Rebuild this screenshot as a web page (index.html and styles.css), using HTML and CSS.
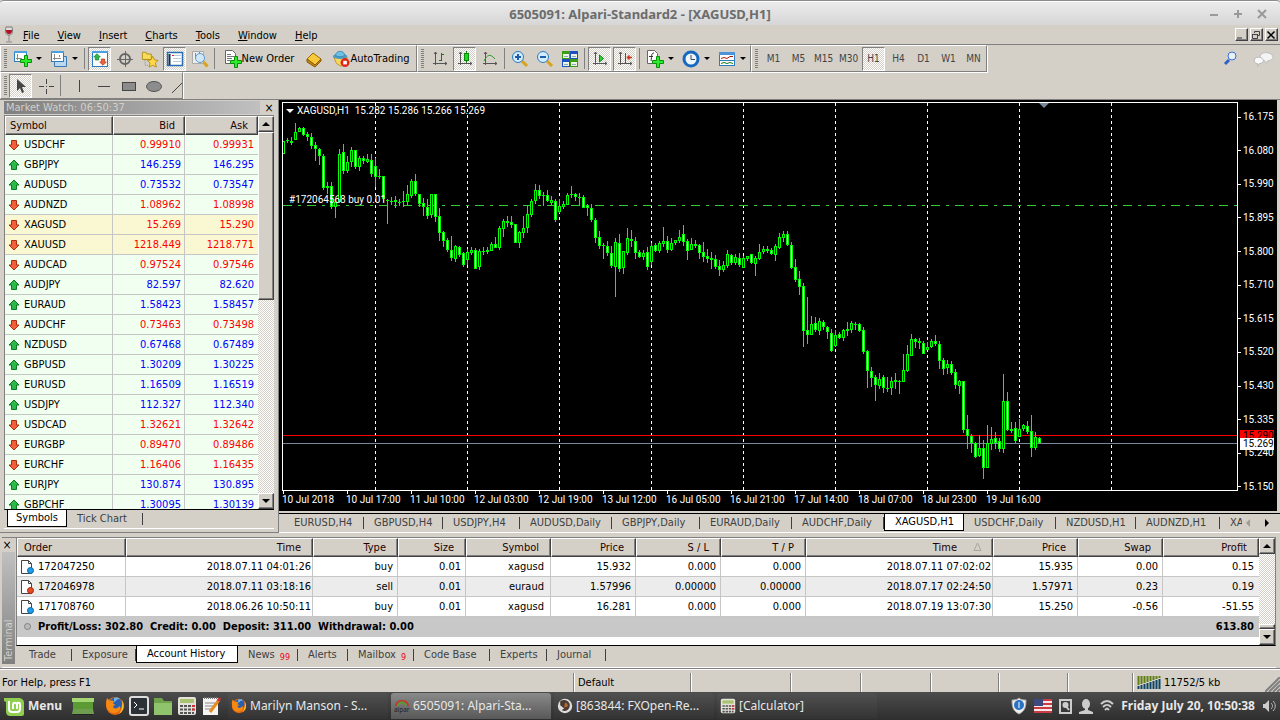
FILE: index.html
```html
<!DOCTYPE html>
<html lang="en">
<head>
    <meta charset="UTF-8">
    <meta name="viewport" content="width=device-width, initial-scale=1.0">
    <title>6505091: Alpari-Standard2 - [XAGUSD,H1]</title>
    <link rel="stylesheet" href="styles.css">
</head>
<body>
    <!-- shared icons -->
    <svg class="sprite" aria-hidden="true">
        <symbol id="up" viewBox="0 0 12 12"><path d="M6 1l5 5H8.500v4.500h-5V6H1z" fill="#2db84a" stroke="#0c7a22"/></symbol>
        <symbol id="down" viewBox="0 0 12 12"><path d="M6 11L1 6h2.500V1.500h5V6H11z" fill="#f0603a" stroke="#a83010"/></symbol>
        <symbol id="plus" viewBox="0 0 12 12"><path d="M4.500 .5h3v4h4v3h-4v4h-3v-4h-4v-3h4z" fill="#2cec2c" stroke="#079007"/></symbol>
        <symbol id="axes" viewBox="0 0 18 18"><path d="M4.500 2v13M2 13.500h14M3 4l1.500-2L6 4M14 12l2 1.500L14 15" fill="none" stroke="#555"/></symbol>
        <symbol id="doc-buy" viewBox="0 0 16 16"><path d="M2.500 1.500h7l3 3v10h-10z" fill="#fff" stroke="#444"/><path d="M9.500 1.500v3h3" fill="none" stroke="#444"/><circle cx="11.500" cy="11.500" r="3" fill="#1e9be8" stroke="#0b68a8"/></symbol>
        <symbol id="doc-sell" viewBox="0 0 16 16"><path d="M2.500 1.500h7l3 3v10h-10z" fill="#fff" stroke="#444"/><path d="M9.500 1.500v3h3" fill="none" stroke="#444"/><circle cx="11.500" cy="11.500" r="3" fill="#e84a22" stroke="#9e2808"/></symbol>
        <symbol id="firefox" viewBox="0 0 20 20"><circle cx="10" cy="10" r="9" fill="#e8660c"/><circle cx="10.500" cy="8" r="6.500" fill="#2a5fb0"/><path d="M9 2c3-1 5 0 6 1-3 0-4 1-4 2l-2 1z" fill="#6fb4ec"/><path d="M1 6l1-4 3 3c2-1 4 0 4 1L8 8c1 0 2 0 2 1-1 1-2 1-2 2 1 2 4 2 7-1 1 4-2 7-6 7-5 0-8-4-8-11z" fill="#f58a12"/><path d="M17 4c3 5 2 11-3 14 3-4 4-9 3-14z" fill="#fdc32c"/></symbol>
        <symbol id="calc" viewBox="0 0 20 20"><rect x="1" y="1" width="18" height="18" rx="2" fill="#e4e2da"/><rect x="3" y="3" width="14" height="4" fill="#a9c36f"/><path d="M3 10h14M3 13.500h14M3 17h14" stroke="#555" stroke-width="2" stroke-dasharray="3 1"/><path d="M15 10h3M15 13.500h3" stroke="#c33" stroke-width="2"/></symbol>
    </svg>

    <header class="titlebar">
        <h1>6505091: Alpari-Standard2 - [XAGUSD,H1]</h1>
        <div class="wm-buttons">
            <button aria-label="Minimize"><svg width="10" height="10"><path d="M1 6h8" stroke-width="2"/></svg></button>
            <button aria-label="Maximize"><svg width="10" height="10"><path d="M1 5h8M5 1v8" stroke-width="2"/></svg></button>
            <button aria-label="Close"><svg width="10" height="10"><path d="M1 1l8 8M9 1L1 9" stroke-width="2"/></svg></button>
        </div>
    </header>

    <nav class="menubar">
        <svg class="wine" width="10" height="18" viewBox="0 0 10 18"><path d="M2 1h6c1 4 1 8-3 8S1 5 2 1z" fill="#ddd" stroke="#777"/><path d="M2 4h6c0 3-1 4-3 4S2 7 2 4z" fill="#b01020"/><path d="M5 9v6M2 16h6" stroke="#888"/></svg>
        <button><u>F</u>ile</button>
        <button><u>V</u>iew</button>
        <button><u>I</u>nsert</button>
        <button><u>C</u>harts</button>
        <button><u>T</u>ools</button>
        <button><u>W</u>indow</button>
        <button><u>H</u>elp</button>
        <div class="mdi-buttons">
            <button aria-label="Minimize chart"><svg width="10" height="10"><path d="M1 8h5" stroke="#808080" stroke-width="2"/></svg></button>
            <button aria-label="Restore chart"><svg width="10" height="10"><path d="M3.500 3V1.500h5v4H7M1.500 4.500h5v4h-5zM1 4.500h6" fill="none" stroke="#444"/></svg></button>
            <button aria-label="Close chart"><svg width="10" height="10"><path d="M1.500 1.500l7 7M8.500 1.500l-7 7" stroke="#000" stroke-width="1.500"/></svg></button>
        </div>
    </nav>

    <div class="toolbar-row">
        <div class="band">
            <i class="grip"></i>
            <button class="drop" aria-label="New chart">
                <svg viewBox="0 0 18 18"><rect x=".5" y="1.500" width="12" height="10" fill="#fff" stroke="#2b7cc0"/><path d="M0 2h13" stroke="#4aa0e0" stroke-width="2"/><path d="M3.500 4v6M2 8.500h6" stroke="#888"/><use href="#plus" x="6" y="5" width="12" height="12"/></svg><i class="caret"></i>
            </button>
            <button class="drop" aria-label="Profiles">
                <svg viewBox="0 0 18 18"><path d="M4.500 6.500h12v10h-12z" fill="#bcd8ee" stroke="#3a78b0"/><rect x="1.500" y="1.500" width="12" height="10" fill="#fff" stroke="#2b7cc0"/><path d="M1 2h13" stroke="#4aa0e0" stroke-width="2"/><path d="M4.500 4v6M3 8.500h8M9.500 5v2" stroke="#888"/></svg><i class="caret"></i>
            </button>
            <i class="sep"></i>
            <button class="pressed" aria-label="Market Watch"><svg viewBox="0 0 18 18"><rect x="1.500" y="1.500" width="15" height="15" fill="#fff" stroke="#2b7cc0"/><path d="M1 2h16" stroke="#4aa0e0" stroke-width="2"/><use href="#up" x="2" y="3" width="8" height="8"/><use href="#down" x="8" y="8" width="8" height="8"/></svg></button>
            <button aria-label="Data Window"><svg viewBox="0 0 18 18"><circle cx="9" cy="9" r="5" fill="none" stroke="#666" stroke-width="2"/><path d="M9.500 1v16M1 9.500h16" stroke="#666"/></svg></button>
            <button aria-label="Navigator"><svg viewBox="0 0 20 20"><path d="M1.500 2.500h4l1 2h5v6h-10z" fill="#f8dc5a" stroke="#b08a10"/><path d="M4.500 11v6h4" fill="none" stroke="#888" stroke-dasharray="1 1"/><path d="M13 7l2 4 4 .5-3 3 1 4.500-4-2-4 2 1-4.500-3-3 4-.5z" fill="#ffd94a" stroke="#b98a12"/></svg></button>
            <button class="pressed" aria-label="Terminal"><svg viewBox="0 0 18 18"><rect x="1.500" y="2.500" width="15" height="13" fill="#fff" stroke="#2b6cb0" stroke-width="1.500"/><path d="M3.500 4v11" stroke="#14324f" stroke-width="2"/><path d="M7 5.500h8M7 8.500h8M7 11.500h8" stroke="#b9c9e0"/><path d="M6 5.500h2" stroke="#e02020"/></svg></button>
            <button aria-label="Strategy Tester"><svg viewBox="0 0 18 18"><path d="M1.500 1.500h11v12h-11z" fill="#eee" stroke="#aaa"/><path d="M4.500 3v6M8.500 2v4" stroke="#888"/><circle cx="9" cy="8" r="4.500" fill="#cfe8fa" stroke="#5b9bd0"/><path d="M12.500 12l4 4.500" stroke="#d8a21a" stroke-width="3"/></svg></button>
            <i class="sep"></i>
            <button class="wide"><svg viewBox="0 0 18 18"><path d="M1.500 .5h7l3 3v10h-10z" fill="#fff" stroke="#666"/><path d="M3 4.500h4M3 6.500h7M3 8.500h5M3 10.500h3" stroke="#777"/><use href="#plus" x="6" y="6" width="12" height="12"/></svg>New Order</button>
            <button aria-label="MetaEditor"><svg viewBox="0 0 18 18"><path d="M2 9l6-6 8 6-6 6z" fill="#f8ca3a" stroke="#9a6a08"/><path d="M2 9v3l8 5 6-6V9l-6 6z" fill="#c98a12" stroke="#8a5a08"/></svg></button>
            <button class="wide auto"><svg viewBox="0 0 20 20"><path d="M2 8h15l-2 7-5 3-5-3z" fill="#f6d860" stroke="#c09020"/><ellipse cx="9" cy="7" rx="8" ry="3" fill="#4a9cc8"/><path d="M4 6c0-6 10-6 10 0-2 2-8 2-10 0z" fill="#6fc0e4" stroke="#3a88b0"/><circle cx="14.500" cy="14" r="5" fill="#e02818"/><rect x="12.500" y="12" width="4" height="4" fill="#fff"/></svg>AutoTrading</button>
        </div>
        <div class="band">
            <i class="grip"></i>
            <button aria-label="Bar chart"><svg viewBox="0 0 18 18"><use href="#axes" width="18" height="18"/><path d="M10.500 3v8M8 10.500h2M11 4.500h2" stroke="#187818"/></svg></button>
            <button class="pressed" aria-label="Candlesticks"><svg viewBox="0 0 18 18"><use href="#axes" width="18" height="18"/><path d="M10.500 1v12" stroke="#187818"/><rect x="8.500" y="3.500" width="4" height="7" fill="#1fd81f" stroke="#078a07"/></svg></button>
            <button aria-label="Line chart"><svg viewBox="0 0 18 18"><use href="#axes" width="18" height="18"/><path d="M3 11c3-6 6-8 11-2" fill="none" stroke="#2a9a2a"/></svg></button>
            <i class="sep"></i>
            <button aria-label="Zoom in"><svg viewBox="0 0 18 18"><path d="M11 11l5 5" stroke="#d8a21a" stroke-width="3"/><circle cx="7" cy="7" r="5.500" fill="#d4ecfc" stroke="#2b7cc0"/><path d="M4 7h6M7 4v6" stroke="#1a5fa8" stroke-width="2"/></svg></button>
            <button aria-label="Zoom out"><svg viewBox="0 0 18 18"><path d="M11 11l5 5" stroke="#d8a21a" stroke-width="3"/><circle cx="7" cy="7" r="5.500" fill="#d4ecfc" stroke="#2b7cc0"/><path d="M4 7h6" stroke="#1a5fa8" stroke-width="2"/></svg></button>
            <button aria-label="Tile windows"><svg viewBox="0 0 18 18"><path d="M1 1h8v8H1zM9 9h8v8H9z" fill="#3c9c14"/><path d="M9 1h8v8H9zM1 9h8v8H1z" fill="#1c50c4"/><path d="M2 4h6v4H2zM10 4h6v4h-6zM2 12h6v4H2zM10 12h6v4h-6z" fill="#eef4e4"/><path d="M3 6.500h4M11 6.500h4M3 14.500h4M11 14.500h4" stroke="#8ab"/></svg></button>
            <i class="sep"></i>
            <button class="pressed" aria-label="Auto scroll"><svg viewBox="0 0 18 18"><use href="#axes" width="18" height="18"/><path d="M8.500 5l4 3.500-4 3.500z" fill="#2fd42f" stroke="#178017"/></svg></button>
            <button class="pressed" aria-label="Chart shift"><svg viewBox="0 0 18 18"><use href="#axes" width="18" height="18"/><path d="M9.500 3v10" stroke="#1a62a0"/><path d="M16 7.500h-5M13.500 5.500l-2 2 2 2" fill="none" stroke="#d03010" stroke-width="1.500"/></svg></button>
            <i class="sep"></i>
            <button class="drop" aria-label="Indicators"><svg viewBox="0 0 18 18"><path d="M1.500 .5h7l3 3v10h-10z" fill="#fff" stroke="#666"/><path d="M8 3c-3 0-2 3-3 8M3 6.500h4" fill="none" stroke="#333"/><use href="#plus" x="6" y="6" width="12" height="12"/></svg><i class="caret"></i></button>
            <button class="drop" aria-label="Periods"><svg viewBox="0 0 18 18"><circle cx="9" cy="9" r="7" fill="#eef6fc" stroke="#1668c0" stroke-width="3"/><path d="M9 5v4.500h4" fill="none" stroke="#444"/></svg><i class="caret"></i></button>
            <button class="drop" aria-label="Templates"><svg viewBox="0 0 18 18"><rect x="1.500" y="2.500" width="15" height="13" fill="#fff" stroke="#2b7cc0"/><path d="M1 3.500h16" stroke="#4a94d8" stroke-width="3"/><path d="M1 10.500h16" stroke="#2b7cc0"/><path d="M3 8.500l3-1 3 1 3-2h3" fill="none" stroke="#a02010"/><path d="M3 13.500l3-1 3 1 3-1 3 1" fill="none" stroke="#187818"/></svg><i class="caret"></i></button>
        </div>
        <div class="band periods">
            <i class="grip"></i>
            <button>M1</button>
            <button>M5</button>
            <button>M15</button>
            <button>M30</button>
            <button class="pressed">H1</button>
            <button>H4</button>
            <button>D1</button>
            <button>W1</button>
            <button>MN</button>
        </div>
        <div class="toolbar-end">
            <button aria-label="Search"><svg viewBox="0 0 18 18"><path d="M7 10l-4 4" stroke="#2a62c8" stroke-width="3"/><circle cx="10" cy="6" r="4" fill="#e8f0fc" stroke="#3a70d0"/></svg></button>
            <button aria-label="Chat"><svg viewBox="0 0 22 18"><path d="M14 2c10 0 10 9 2 9l-1 3-2-3C6 11 6 2 14 2z" fill="#f4f4f4" stroke="#bbb"/><path d="M6 7c7 0 7 7 1 7l-2 3v-3c-5 0-5-7 1-7z" fill="#fafafa" stroke="#b4b4b4"/></svg></button>
        </div>
    </div>

    <div class="toolbar-row">
        <div class="band tools">
            <i class="grip"></i>
            <button class="pressed" aria-label="Cursor"><svg viewBox="0 0 18 18"><path d="M5 2v12l3-3 2 5 2-1-2-5h4z" fill="#444"/></svg></button>
            <button aria-label="Crosshair"><svg viewBox="0 0 18 18"><path d="M9.500 2v5M9.500 12v5M2 9.500h5M12 9.500h5M9 9.500h1" stroke="#444"/></svg></button>
            <i class="sep"></i>
            <button aria-label="Vertical line"><svg viewBox="0 0 18 18"><path d="M9.500 3v12" stroke="#444"/></svg></button>
            <button aria-label="Horizontal line"><svg viewBox="0 0 18 18"><path d="M3 9.500h12" stroke="#444"/></svg></button>
            <button aria-label="Rectangle"><svg viewBox="0 0 18 18"><rect x="2.500" y="5.500" width="13" height="8" fill="#8c8c8c" stroke="#444"/></svg></button>
            <button aria-label="Ellipse"><svg viewBox="0 0 18 18"><ellipse cx="9" cy="9.500" rx="7.500" ry="5" fill="#8c8c8c" stroke="#555"/></svg></button>
            <button class="cut" aria-label="Trendline"><svg viewBox="0 0 18 18"><path d="M7 16L18 5" stroke="#444"/></svg></button>
        </div>
    </div>

    <main class="workspace">
        <section class="watch">
            <div class="caption"><h2>Market Watch: 06:50:37</h2><button class="x" aria-label="Close Market Watch">×</button></div>
            <div class="list">
                <div class="clip">
                <table>
                    <colgroup><col class="c-symbol"><col class="c-bid"><col class="c-ask"></colgroup>
                    <thead><tr><th>Symbol</th><th>Bid</th><th>Ask</th></tr></thead>
                    <tbody>
                        <tr class="down"><td><svg><use href="#down"/></svg>USDCHF</td><td>0.99910</td><td>0.99931</td></tr>
                        <tr><td><svg><use href="#up"/></svg>GBPJPY</td><td>146.259</td><td>146.295</td></tr>
                        <tr><td><svg><use href="#up"/></svg>AUDUSD</td><td>0.73532</td><td>0.73547</td></tr>
                        <tr class="down"><td><svg><use href="#down"/></svg>AUDNZD</td><td>1.08962</td><td>1.08998</td></tr>
                        <tr class="down metal"><td><svg><use href="#down"/></svg>XAGUSD</td><td>15.269</td><td>15.290</td></tr>
                        <tr class="down metal"><td><svg><use href="#down"/></svg>XAUUSD</td><td>1218.449</td><td>1218.771</td></tr>
                        <tr class="down"><td><svg><use href="#down"/></svg>AUDCAD</td><td>0.97524</td><td>0.97546</td></tr>
                        <tr><td><svg><use href="#up"/></svg>AUDJPY</td><td>82.597</td><td>82.620</td></tr>
                        <tr><td><svg><use href="#up"/></svg>EURAUD</td><td>1.58423</td><td>1.58457</td></tr>
                        <tr class="down"><td><svg><use href="#down"/></svg>AUDCHF</td><td>0.73463</td><td>0.73498</td></tr>
                        <tr><td><svg><use href="#up"/></svg>NZDUSD</td><td>0.67468</td><td>0.67489</td></tr>
                        <tr><td><svg><use href="#up"/></svg>GBPUSD</td><td>1.30209</td><td>1.30225</td></tr>
                        <tr><td><svg><use href="#up"/></svg>EURUSD</td><td>1.16509</td><td>1.16519</td></tr>
                        <tr><td><svg><use href="#up"/></svg>USDJPY</td><td>112.327</td><td>112.340</td></tr>
                        <tr class="down"><td><svg><use href="#down"/></svg>USDCAD</td><td>1.32621</td><td>1.32642</td></tr>
                        <tr class="down"><td><svg><use href="#down"/></svg>EURGBP</td><td>0.89470</td><td>0.89486</td></tr>
                        <tr class="down"><td><svg><use href="#down"/></svg>EURCHF</td><td>1.16406</td><td>1.16435</td></tr>
                        <tr><td><svg><use href="#up"/></svg>EURJPY</td><td>130.874</td><td>130.895</td></tr>
                        <tr><td><svg><use href="#up"/></svg>GBPCHF</td><td>1.30095</td><td>1.30139</td></tr>
                    </tbody>
                </table>
                </div>
                <div class="scroll">
                    <button aria-label="Scroll up"><i class="arrow-up"></i></button>
                    <i class="thumb"></i>
                    <button aria-label="Scroll down"><i class="arrow-down"></i></button>
                </div>
            </div>
            <div class="tabs watch-tabs">
                <button class="active">Symbols</button>
                <button>Tick Chart</button>
            </div>
        </section>

        <section class="charts">
            <div class="chart">
                <div class="plot">
                    <svg id="plot" width="100%" height="100%">
                        <g id="periods"></g>
                        <path d="M756 0h10l-5 5z" fill="#778899"/>
                        <line class="trade" x1="0" y1="102.500" x2="100%" y2="102.500"/>
                        <line class="ask" x1="0" y1="332.500" x2="100%" y2="332.500"/>
                        <line class="bid" x1="0" y1="340.500" x2="100%" y2="340.500"/>
                        <g id="candles" transform="translate(0 -3)"></g>
                        <path d="M3 6h8l-4 4z" fill="#fff"/>
                        <text x="14" y="11">XAGUSD,H1&#160; 15.282 15.286 15.266 15.269</text>
                        <text x="6" y="100">#172064568 buy 0.01</text>
                    </svg>
                </div>
                <div class="prices">
                    <span>16.175</span><span>16.080</span><span>15.990</span><span>15.895</span><span>15.800</span><span>15.710</span><span>15.615</span><span>15.520</span><span>15.430</span><span>15.335</span><span>15.240</span><span>15.150</span>
                    <b class="tag-ask">15.290</b>
                    <b class="tag-bid">15.269</b>
                </div>
                <div class="times">
                    <span>10 Jul 2018</span><span>10 Jul 17:00</span><span>11 Jul 10:00</span><span>12 Jul 03:00</span><span>12 Jul 19:00</span><span>13 Jul 12:00</span><span>16 Jul 05:00</span><span>16 Jul 21:00</span><span>17 Jul 14:00</span><span>18 Jul 07:00</span><span>18 Jul 23:00</span><span>19 Jul 16:00</span>
                </div>
            </div>
            <div class="tabs chart-tabs">
                <button>EURUSD,H4</button>
                <button>GBPUSD,H4</button>
                <button>USDJPY,H4</button>
                <button>AUDUSD,Daily</button>
                <button>GBPJPY,Daily</button>
                <button>EURAUD,Daily</button>
                <button>AUDCHF,Daily</button>
                <button class="active">XAGUSD,H1</button>
                <button>USDCHF,Daily</button>
                <button>NZDUSD,H1</button>
                <button>AUDNZD,H1</button>
                <button class="last">XAUUSD,H1</button>
                <div class="tab-arrows"><i class="arrow-left"></i><i class="arrow-right"></i></div>
            </div>
        </section>
    </main>

    <section class="terminal">
        <div class="side"><button class="x" aria-label="Close Terminal">×</button><h2>Terminal</h2></div>
        <div class="terminal-body">
            <div class="history">
                <table>
                    <colgroup><col class="w-order"><col class="w-time"><col class="w-std"><col class="w-size"><col class="w-std"><col class="w-std"><col class="w-std"><col class="w-std"><col class="w-time"><col class="w-std"><col class="w-std"><col class="w-profit"></colgroup>
                    <thead><tr><th>Order</th><th>Time</th><th>Type</th><th>Size</th><th>Symbol</th><th>Price</th><th>S / L</th><th>T / P</th><th>Time<svg class="sort" width="9" height="9"><path d="M4.500 1L1 8.500h7z" fill="none" stroke="#aaa69e"/></svg></th><th>Price</th><th>Swap</th><th>Profit</th></tr></thead>
                    <tbody>
                        <tr><td><svg><use href="#doc-buy"/></svg>172047250</td><td>2018.07.11 04:01:26</td><td>buy</td><td>0.01</td><td>xagusd</td><td>15.932</td><td>0.000</td><td>0.000</td><td>2018.07.11 07:02:02</td><td>15.935</td><td>0.00</td><td>0.15</td></tr>
                        <tr class="alt"><td><svg><use href="#doc-sell"/></svg>172046978</td><td>2018.07.11 03:18:16</td><td>sell</td><td>0.01</td><td>euraud</td><td>1.57996</td><td>0.00000</td><td>0.00000</td><td>2018.07.17 02:24:50</td><td>1.57971</td><td>0.23</td><td>0.19</td></tr>
                        <tr><td><svg><use href="#doc-buy"/></svg>171708760</td><td>2018.06.26 10:50:11</td><td>buy</td><td>0.01</td><td>xagusd</td><td>16.281</td><td>0.000</td><td>0.000</td><td>2018.07.19 13:07:30</td><td>15.250</td><td>-0.56</td><td>-51.55</td></tr>
                    </tbody>
                    <tfoot><tr><td colspan="11"><i class="dot"></i>Profit/Loss: 302.80&#160; Credit: 0.00&#160; Deposit: 311.00&#160; Withdrawal: 0.00</td><td>613.80</td></tr></tfoot>
                </table>
                <div class="scroll">
                    <button aria-label="Scroll up"><i class="arrow-up"></i></button>
                    <i class="thumb"></i>
                    <button aria-label="Scroll down"><i class="arrow-down"></i></button>
                </div>
            </div>
            <div class="tabs terminal-tabs">
                <button>Trade</button>
                <button>Exposure</button>
                <button class="active">Account History</button>
                <button>News<small>99</small></button>
                <button>Alerts</button>
                <button>Mailbox<small>9</small></button>
                <button>Code Base</button>
                <button>Experts</button>
                <button>Journal</button>
            </div>
        </div>
    </section>

    <footer class="status">
        <span>For Help, press F1</span><span>Default</span><span></span><span></span><span></span><span></span><span></span><span></span>
        <span class="traffic"><svg width="24" height="14"><path d="M1.500 0v9M4.500 0v8M7.500 0v7M10.500 0v6M13.500 0v5M16.500 0v4M19.500 0v3M22.500 0v2" stroke="#5f7f12" stroke-width="2"/><path d="M1.500 10v3M4.500 9v4M7.500 8v5M10.500 7v6M13.500 6v7M16.500 5v8M19.500 4v9M22.500 3v10" stroke="#0d4664" stroke-width="2"/></svg>11752/5 kb<svg class="resize" width="15" height="15"><path d="M0 15L15 0M4 15L15 4M8 15l7-7M12 15l3-3" stroke="#808080" stroke-width="2"/></svg></span>
    </footer>

    <div class="taskbar">
        <button class="menu"><svg width="20" height="20" viewBox="0 0 20 20"><path d="M0 2h14c4 0 6 2 6 5v11c0 1-1 2-2 2H7c-4 0-5-2-5-5V6L0 5z" fill="#8fce4f"/><path d="M5 5v8c0 2 1 3 3 3h5c2 0 3-1 3-3V9c0-3-3-3-3 0v4M13 9c0-3-4-3-4 0v4" fill="none" stroke="#fff" stroke-width="2"/></svg>Menu</button>
        <div class="launchers">
            <button class="desktop" aria-label="Show desktop"><svg width="22" height="20"><path d="M1 2h20v11H1z" fill="#5c9a34"/><path d="M0 2h22v4H0z" fill="#a4d672"/><path d="M1 13h20v6H1z" fill="#222"/><path d="M1 13h20l1 5H0z" fill="#6e9d50"/></svg></button>
            <button aria-label="Firefox"><svg><use href="#firefox"/></svg></button>
            <button aria-label="Terminal emulator"><svg viewBox="0 0 20 20"><rect x="1" y="1" width="18" height="18" rx="2" fill="#2c3138" stroke="#ddd" stroke-width="2"/><path d="M5 6l3 3-3 3M10 13h5" fill="none" stroke="#fff"/></svg></button>
            <button aria-label="Files"><svg viewBox="0 0 20 20"><path d="M1 2h8l2 3h8v14H1z" fill="#70a34c"/><path d="M1 7h18v12H1z" fill="#8fc46c"/></svg></button>
            <button aria-label="Calculator"><svg><use href="#calc"/></svg></button>
            <button aria-label="Text editor"><svg viewBox="0 0 20 20"><path d="M2 2h15v17H2z" fill="#f4f4f4"/><path d="M3 2h14" stroke="#777" stroke-width="2" stroke-dasharray="1 1"/><path d="M4 7h10M4 10h8M4 13h6" stroke="#888"/><path d="M18 4L9 16" stroke="#e88a1c" stroke-width="3"/><path d="M19 2l-2 3" stroke="#c33" stroke-width="3"/></svg></button>
        </div>
        <div class="tasks">
            <button><svg><use href="#firefox"/></svg>Marilyn Manson - S...</button>
            <button class="current"><svg viewBox="0 0 20 20"><path d="M2 10c2-9 14-9 16 0" fill="none" stroke="#c0392b" stroke-width="2"/><path d="M5 10c2-6 8-6 10 0" fill="none" stroke="#5a9a30" stroke-width="2"/><text x="0" y="18" font-size="8" fill="#222">alpari</text></svg>6505091: Alpari-Sta...</button>
            <button><svg viewBox="0 0 20 20"><circle cx="10" cy="10" r="9" fill="#ddd"/><path d="M4 4c5-4 13 0 12 6s-7 8-10 5l3-2-5-4z" fill="#4a3a34"/><path d="M10 6c3 0 4 3 3 5l-4 1z" fill="#b86a2c"/></svg>[863844: FXOpen-Re...</button>
            <button><svg><use href="#calc"/></svg>[Calculator]</button>
        </div>
        <div class="tray">
            <svg width="16" height="18" viewBox="0 0 16 18"><path d="M8 1c2 2 5 2 7 2 0 7-1 11-7 14C2 14 1 10 1 3c2 0 5 0 7-2z" fill="#eee" stroke="#aaa"/><circle cx="8" cy="8" r="5" fill="#2a72c4"/><path d="M8 5v6" stroke="#fff"/></svg>
            <svg width="18" height="14"><path d="M0 0h18v13H0z" fill="#f4e8e8"/><path d="M0 1h18M0 5h18M0 9h18M0 13h18" stroke="#cc3a44" stroke-width="2"/><path d="M0 0h9v7H0z" fill="#3c4a80"/></svg>
            <svg width="13" height="15"><rect x="1" y="1" width="11" height="13" fill="none" stroke="#ccc" stroke-width="2"/><circle cx="6.500" cy="6" r="3" fill="#ccc"/><path d="M6 6l4 5" stroke="#ccc" stroke-width="2"/></svg>
            <svg width="14" height="15"><ellipse cx="7" cy="5" rx="4" ry="5" fill="#ccc"/><path d="M6 8h3v3l5 2v2H0v-2l6-2z" fill="#ccc"/></svg>
            <svg width="14" height="14" fill="none" stroke="#ccc" stroke-width="2"><path d="M1 5c4-4 8-4 12 0M3 8c3-3 5-3 8 0M5 11c2-2 2-2 4 0"/></svg>
            <time>Friday July 20, 10:50:38</time>
            <svg width="15" height="14"><path d="M1 5h2l4-4v12L3 9H1z" fill="#ccc"/><path d="M9 4c2 2 2 4 0 6M11 2c3 3 3 7 0 10" fill="none" stroke="#bbb"/></svg>
        </div>
    </div>

    <script>
        // high, body top, body bottom, low, filled
        const candles = [
            [41,41,54,54,0],[38,40,41,43,0],[37,41,43,45,0],[23,32,40,40,0],[27,28,32,32,0],[27,28,35,36,1],[32,34,37,41,1],[33,37,46,49,1],
            [42,45,49,61,1],[48,49,56,65,1],[54,56,88,90,1],[82,86,88,94,0],[82,86,107,109,1],[99,102,107,118,0],[49,54,102,103,0],[44,52,71,74,1],
            [56,62,71,73,0],[47,50,62,67,0],[50,50,67,69,1],[56,58,67,71,0],[56,58,61,64,1],[54,59,62,63,0],[54,60,74,77,1],[58,66,77,87,1],
            [69,76,77,79,1],[76,76,99,102,1],[99,100,101,124,0],[97,101,102,105,0],[96,100,102,108,1],[99,102,103,106,1],[91,101,102,107,0],[85,94,102,106,0],
            [79,81,96,98,0],[74,81,94,96,1],[94,94,104,107,1],[98,103,107,116,1],[99,107,116,119,1],[94,94,115,118,0],[94,94,117,122,1],[108,116,133,141,1],
            [131,132,141,147,1],[138,140,150,152,1],[136,150,158,161,1],[145,146,159,162,0],[146,147,155,157,1],[152,153,165,167,1],[149,152,160,165,0],[147,150,153,155,0],
            [148,150,169,169,1],[149,151,167,170,0],[147,151,152,155,0],[147,150,152,154,0],[142,144,151,151,0],[137,144,148,148,1],[126,128,148,150,0],[119,121,129,137,0],
            [116,121,123,127,0],[116,122,125,128,1],[124,124,143,143,1],[131,132,143,148,0],[116,128,133,138,0],[105,114,128,133,0],[99,101,115,117,0],[84,90,101,104,0],
            [85,90,96,99,1],[92,95,96,106,0],[90,95,101,102,1],[96,100,103,105,0],[99,101,120,122,1],[99,106,112,113,0],[101,104,107,109,0],[93,95,105,105,0],
            [86,94,95,98,0],[93,94,97,101,1],[93,97,98,106,0],[95,97,108,108,1],[104,105,108,116,1],[104,108,120,122,1],[118,120,138,143,1],[131,137,146,149,1],
            [143,145,146,159,0],[141,146,153,156,1],[146,153,166,168,1],[138,142,167,197,0],[134,143,169,172,1],[151,151,168,174,0],[128,138,153,155,0],[130,139,141,147,0],
            [137,141,153,159,1],[150,152,157,158,1],[150,153,157,160,0],[147,152,167,170,1],[143,146,162,165,0],[143,145,151,152,1],[141,143,151,153,0],[127,141,144,147,0],
            [136,141,150,153,1],[138,143,150,151,0],[140,140,143,145,0],[130,137,141,143,0],[125,134,142,146,1],[139,141,151,160,1],[138,144,150,150,0],[140,144,146,148,0],
            [144,145,153,159,1],[142,152,157,162,1],[149,156,159,163,1],[152,158,160,169,0],[155,159,167,169,1],[160,166,170,176,1],[161,165,170,172,0],[150,154,166,168,0],
            [154,155,163,165,1],[154,157,163,165,0],[153,158,165,167,1],[156,158,168,168,0],[156,156,159,161,0],[154,154,163,164,1],[156,158,164,176,0],[144,152,159,160,0],
            [146,149,152,154,0],[146,149,151,153,0],[148,150,154,155,1],[144,146,155,161,0],[133,137,148,149,0],[131,134,138,142,0],[131,134,145,146,1],[142,145,168,169,1],
            [159,167,180,182,1],[171,179,187,195,1],[183,186,231,247,1],[197,230,235,244,1],[216,224,235,235,0],[217,223,230,232,1],[218,221,231,235,0],[220,222,227,230,1],
            [226,227,232,239,1],[229,233,251,252,1],[230,235,246,247,0],[232,234,238,239,1],[229,230,238,241,0],[222,229,231,236,0],[221,223,230,233,0],[222,224,225,230,0],
            [223,224,231,232,1],[227,230,252,254,1],[250,251,271,288,1],[267,271,278,287,1],[275,277,285,301,1],[273,279,286,289,0],[275,277,288,293,1],[277,288,289,292,0],
            [277,281,288,295,0],[273,280,282,289,0],[280,281,282,294,0],[254,270,282,282,0],[245,254,271,272,0],[234,239,256,256,0],[238,239,242,248,1],[238,241,243,249,0],
            [241,243,254,254,1],[242,247,250,250,0],[239,241,247,248,0],[235,241,244,246,1],[241,244,261,269,1],[258,260,269,275,1],[260,264,268,274,0],[261,264,273,275,1],
            [269,272,285,289,1],[280,281,286,294,0],[281,281,330,333,1],[315,329,336,349,1],[334,336,343,353,1],[342,343,357,358,1],[335,348,356,357,0],[340,348,368,379,1],
            [325,343,368,368,0],[327,339,344,350,0],[332,338,343,349,1],[338,341,349,352,1],[274,301,349,353,0],[292,301,330,331,1],[322,329,331,333,0],[322,328,341,343,1],
            [319,329,337,337,0],[324,325,329,331,0],[321,326,332,334,1],[315,331,348,357,1],[332,337,348,350,0],[337,338,343,344,1]
        ];
        const step = 4;
        const rect = (x, y, w, h, cls) => `<rect x="${x}" y="${y}" width="${w}" height="${h}" class="${cls}"/>`;

        document.getElementById("candles").innerHTML = candles.map(([high, top, bottom, low, filled], i) => {
            const x = i * step;
            let out = rect(x, high, 1, Math.max(1, low - high), "wick") + rect(x - 1, top, 3, bottom - top, "wick");
            if (bottom - top > 2) {
                out += rect(x, top + 1, 1, bottom - top - 2, filled ? "filled" : "hollow");
            }
            return out;
        }).join("");

        // one separator per 23 hourly bars
        let lines = "";
        for (let x = 92; x < 920; x += 92) {
            lines += `<line x1="${x}.5" y1="0" x2="${x}.5" y2="100%"/>`;
        }
        document.getElementById("periods").innerHTML = lines;
    </script>
</body>
</html>
```
FILE: styles.css
```css
* {
    box-sizing: border-box;
}
body {
    margin: 0;
    height: 100vh;
    display: flex;
    flex-direction: column;
    overflow: hidden;
    background: #d4d0c8;
    color: #000;
    font-family: "DejaVu Sans Condensed", "DejaVu Sans", sans-serif;
    font-size: 11px;
    line-height: 14px;
}
button {
    margin: 0;
    padding: 0;
    border: 0;
    background: none;
    color: inherit;
    font: inherit;
    white-space: nowrap;
}
h1, h2 {
    margin: 0;
    font-size: 11px;
    font-weight: normal;
}
table {
    width: 100%;
    border-collapse: separate;
    border-spacing: 0;
    table-layout: fixed;
}
i {
    display: block;
    flex: none;
}
.sprite {
    position: absolute;
    width: 0;
    height: 0;
}

/* window title */
.titlebar {
    flex: none;
    display: grid;
    grid-template-columns: 1fr auto 1fr;
    align-items: center;
    height: 25px;
    border-top: 1px solid #8c8c8c;
    border-radius: 4px 4px 0 0;
    background: linear-gradient(#ececec, #d6d6d6);
    box-shadow: inset 0 1px #fff;
}
.titlebar h1 {
    grid-column: 2;
    padding-top: 2px;
    color: #6c6c6c;
    font: bold 13px/20px "Noto Sans", sans-serif;
}
.wm-buttons {
    display: flex;
    justify-content: flex-end;
    gap: 14px;
    padding: 2px 13px 0 0;
}
.wm-buttons svg {
    display: block;
    stroke: #999;
}

.menubar {
    flex: none;
    display: flex;
    align-items: center;
    height: 20px;
    padding-left: 4px;
    border-bottom: 1px solid #808080;
}
.menubar > button {
    padding: 3px 9px 0 9px;
}
.wine {
    flex: none;
}
.mdi-buttons {
    display: flex;
    gap: 2px;
    margin-left: auto;
    padding-right: 2px;
}
.mdi-buttons button, .scroll button, .thumb {
    background: #d4d0c8;
    border: 1px solid;
    border-color: #fff #404040 #404040 #fff;
    box-shadow: inset -1px -1px #808080;
}
.mdi-buttons button {
    width: 13px;
    height: 13px;
}
.mdi-buttons svg {
    display: block;
}

/* toolbars */
.toolbar-row {
    flex: none;
    display: flex;
    height: 27px;
}
.band {
    display: flex;
    align-items: center;
    padding-left: 3px;
    border: 1px solid;
    border-color: #fff #808080 #808080 #fff;
    box-shadow: 1px 1px #fff;
}
.grip {
    width: 3px;
    height: 20px;
    margin-right: 3px;
    background: repeating-linear-gradient(#808080 0 1px, #d4d0c8 1px 2px);
}
.band button {
    display: flex;
    align-items: center;
    justify-content: center;
    width: 25px;
    height: 24px;
}
.band button svg {
    flex: none;
    width: 18px;
    height: 18px;
}
.band .drop {
    width: 36px;
}
.band .wide {
    width: 84px;
}
.band .auto {
    width: 90px;
}
.band .pressed {
    width: 23px;
    margin: 0 1px;
    border: 1px solid;
    border-color: #808080 #fff #fff #808080;
    background: repeating-conic-gradient(#fff 0 25%, #d4d0c8 0 50%) 0 0 / 2px 2px;
}
.sep {
    width: 1px;
    height: 21px;
    margin: 0 2px;
    background: #808080;
}
.caret {
    margin-left: 4px;
    border: 3px solid transparent;
    border-top-color: #000;
    border-bottom: 0;
}
.periods {
    color: #444;
    font-size: 10px;
}
.tools .grip {
    margin-right: 1px;
}
.tools .sep {
    margin-right: 5px;
}
.tools .cut {
    width: 16px;
    overflow: hidden;
}
.toolbar-end {
    display: flex;
    align-items: center;
    gap: 12px;
    margin-left: auto;
    padding-right: 7px;
}
.toolbar-end svg {
    display: block;
    width: 20px;
    height: 18px;
}

/* market watch */
.workspace {
    flex: 1;
    min-height: 0;
    display: flex;
    border-top: 1px solid #808080;
}
.watch {
    flex: none;
    display: flex;
    flex-direction: column;
    width: 279px;
    padding: 1px 4px 3px 4px;
    border-right: 1px solid #808080;
    border-bottom: 1px solid #808080;
}
.caption {
    flex: none;
    display: flex;
    justify-content: space-between;
    height: 14px;
}
.caption h2 {
    width: 256px;
    height: 13px;
    padding-left: 2px;
    line-height: 13px;
    color: #d4d0c8;
    background: linear-gradient(90deg, #808080, #c0c0c0);
}
.x {
    width: 10px;
    font-size: 12px;
    line-height: 14px;
}
.list {
    flex: 1;
    min-height: 0;
    display: flex;
    border-left: 1px solid #808080;
    border-top: 1px solid #808080;
    border-bottom: 1px solid #000;
}
.clip {
    flex: 1;
    min-width: 0;
    overflow: hidden;
    background: #fff;
}
th {
    height: 19px;
    padding: 0 11px;
    font-weight: normal;
    text-align: right;
    color: #200;
    background: #d4d0c8;
    border: 1px solid;
    border-color: #fff #404040 #404040 #fff;
    box-shadow: inset -1px -1px #808080;
}
th:first-child {
    padding-left: 6px;
    text-align: left;
}
td {
    height: 20px;
    padding: 0 4px;
    text-align: right;
    white-space: nowrap;
    border-right: 1px solid #c6c6c6;
    border-bottom: 1px solid #c6c6c6;
}
td:first-child {
    text-align: left;
}
td svg {
    vertical-align: middle;
}
.c-symbol {
    width: 108px;
}
.c-bid {
    width: 72px;
}
.c-ask {
    width: 73px;
}
.watch th {
    padding-right: 9px;
}
.watch th:first-child {
    padding-left: 4px;
}
.watch td {
    padding: 0 3px;
    color: #00f;
    background: #f0fff0;
}
.watch td:last-child {
    padding-right: 4px;
    border-right: 0;
}
.watch td svg {
    width: 12px;
    height: 12px;
    margin-right: 4px;
}
.watch .down td {
    color: #f00;
}
.watch .metal td {
    background: #faf8d2;
}
.watch tbody td:first-child {
    color: #000;
}

.scroll {
    flex: none;
    display: flex;
    flex-direction: column;
    width: 16px;
    background: repeating-conic-gradient(#fff 0 25%, #d4d0c8 0 50%) 0 0 / 2px 2px;
}
.scroll button {
    flex: none;
    display: grid;
    place-items: center;
    width: 16px;
    height: 16px;
}
.scroll button:last-child {
    margin-top: auto;
}
.thumb {
    height: 168px;
}
.arrow-up, .arrow-down {
    border: 4px solid transparent;
}
.arrow-up {
    border-top: 0;
    border-bottom-color: #000;
}
.arrow-down {
    border-bottom: 0;
    border-top-color: #000;
}

/* tabs */
.tabs {
    flex: none;
    display: grid;
    color: #404040;
}
.tabs button {
    display: flex;
    align-items: center;
    height: 17px;
    padding-left: 10px;
    text-align: left;
}
.tabs button::after {
    content: "";
    width: 1px;
    height: 12px;
    margin-left: auto;
    background: #404040;
}
.tabs .active {
    color: #000;
    background: #fff;
    border: 1px solid #000;
    border-top: 0;
}
.tabs .active::after {
    display: none;
}
.watch-tabs {
    grid-template-columns: 60px 76px;
    padding-left: 3px;
    height: 19px;
    border-bottom: 1px solid #fff;
}
.watch-tabs .active {
    padding-left: 8px;
}

/* chart */
.charts {
    flex: 1;
    min-width: 0;
    display: flex;
    flex-direction: column;
    border-bottom: 1px solid #fff;
}
.chart {
    flex: 1;
    min-height: 0;
    display: grid;
    grid-template: 1fr 20px / 1fr 39px;
    margin-right: 3px;
    padding: 2px 0 0 3px;
    background: #000;
    color: #fff;
    font-family: Roboto, sans-serif;
    font-size: 10px;
}
.plot {
    min-height: 0;
    border: 1px solid #fff;
}
#plot {
    display: block;
    fill: #fff;
}
#plot line {
    stroke-width: 1px;
}
#periods {
    stroke: #fff;
    stroke-dasharray: 3 3;
}
.trade {
    stroke: #32cd32;
    stroke-dasharray: 9 6 3 6;
}
.ask {
    stroke: #f00;
}
.bid {
    stroke: #778899;
}
.wick {
    fill: #0f0;
}
.hollow {
    fill: #000;
}
.filled {
    fill: #fff;
}
.prices {
    position: relative;
    display: flex;
    flex-direction: column;
    justify-content: space-between;
    padding: 9px 0 0;
    margin-bottom: -2px;
    line-height: 12px;
}
.prices span {
    display: flex;
    align-items: center;
    gap: 2px;
}
.prices span::before {
    content: "";
    width: 3px;
    height: 1px;
    background: #fff;
}
.prices b {
    position: absolute;
    left: 2px;
    width: 34px;
    height: 12px;
    padding-left: 3px;
    color: #000;
    font-weight: normal;
}
.tag-ask {
    top: 328px;
    background: #f00;
}
.tag-bid {
    top: 336px;
    background: #fff;
}
.times {
    grid-column: 1 / -1;
    display: grid;
    grid-template-columns: repeat(auto-fill, 64px);
    white-space: nowrap;
    line-height: 12px;
}
.times span::before {
    content: "";
    display: block;
    width: 1px;
    height: 3px;
    margin-left: 1px;
    background: #fff;
}
.chart-tabs {
    grid-template-columns: 80px 79px 77px 92px 88px 92px 92px 80px 92px 80px 84px 22px 1fr;
    margin-top: 2px;
    padding-left: 5px;
    height: 19px;
    border-top: 1px solid #000;
}
.chart-tabs .last {
    overflow: hidden;
}
.tab-arrows {
    display: flex;
    align-items: center;
    gap: 15px;
    padding-left: 4px;
}
.arrow-left, .arrow-right {
    border: 4px solid transparent;
}
.arrow-left {
    border-left: 0;
    border-right-color: #a09c94;
}
.arrow-right {
    border-right: 0;
    border-left-color: #000;
}

/* terminal */
.terminal {
    flex: none;
    display: flex;
    margin: 4px 4px 0 2px;
    padding-bottom: 3px;
    border-top: 1px solid #808080;
    border-bottom: 1px solid #fff;
}
.side {
    flex: none;
    width: 14px;
    display: flex;
    flex-direction: column;
}
.side h2 {
    flex: 1;
    writing-mode: vertical-rl;
    transform: rotate(180deg);
    width: 13px;
    line-height: 13px;
    padding-top: 3px;
    color: #d4d0c8;
    background: linear-gradient(#808080, #c0c0c0);
}
.terminal-body {
    flex: 1;
    min-width: 0;
}
.history {
    display: flex;
    height: 108px;
    background: #fff;
    border: 1px solid #808080;
    border-width: 0 1px 1px 1px;
    border-bottom-color: #000;
}
.history table {
    flex: 1;
    align-self: flex-start;
    min-width: 0;
}
.w-order {
    width: 109px;
}
.w-time {
    width: 187px;
}
.w-std {
    width: 85px;
}
.w-size {
    width: 68px;
}
.w-profit {
    width: 96px;
}
.history td:first-child {
    padding-left: 2px;
}
.history td svg {
    width: 16px;
    height: 16px;
    margin-right: 3px;
}
.history tbody td:nth-child(2), .history td:nth-child(9) {
    padding-right: 1px;
}
.history td:nth-child(5) {
    padding-right: 6px;
}
.history td:last-child {
    padding-right: 5px;
    border-right: 0;
}
.history .alt td {
    background: #ececec;
}
.history tfoot td {
    background: #c8c8c8;
    border-color: #c8c8c8;
    font-weight: bold;
}
.history tfoot td:last-child {
    padding-right: 5px;
}
.sort {
    margin: 0 -1px 0 16px;
}
.dot {
    display: inline-block;
    width: 7px;
    height: 7px;
    margin: 0 7px 0 5px;
    border: 1px solid #808080;
    border-radius: 50%;
    background: #bbb;
}
.history .thumb {
    height: 5px;
    margin-top: auto;
}
.history .scroll button:last-child {
    margin-top: 0;
}
.terminal-tabs {
    grid-template-columns: 53px 64px 102px 60px 50px 66px 76px 57px 59px;
    padding-left: 3px;
    height: 18px;
}
.terminal-tabs small {
    margin: 5px 0 0 5px;
    color: #f00018;
    font-size: 9px;
}

.status {
    flex: none;
    display: grid;
    grid-template-columns: 1fr 117px 100px 70px 70px 68px 69px 65px 148px;
    align-items: end;
    height: 24px;
    border-top: 1px solid #808080;
    box-shadow: inset 0 1px #fff;
}
.status span {
    display: flex;
    align-items: center;
    height: 19px;
    padding-left: 4px;
    border-left: 1px solid #808080;
    box-shadow: inset 1px 0 #fff;
}
.status span:first-child {
    padding-left: 2px;
    border: 0;
    box-shadow: none;
}
.traffic svg {
    margin-right: 3px;
}
.status .resize {
    margin: 4px 0 0 auto;
}

/* desktop panel */
.taskbar {
    flex: none;
    display: flex;
    align-items: center;
    height: 28px;
    color: #e8e8e8;
    background: linear-gradient(#4c4c4c, #2e2e2e);
    font: 12px/18px "Noto Sans", sans-serif;
}
.taskbar button {
    display: flex;
    align-items: center;
}
.taskbar .menu {
    gap: 4px;
    width: 72px;
    padding-left: 4px;
    font-weight: bold;
}
.launchers {
    display: flex;
    gap: 4px;
}
.launchers svg {
    width: 20px;
    height: 20px;
}
.launchers .desktop {
    width: 29px;
}
.launchers .desktop svg {
    width: 22px;
}
.tasks {
    flex: 1;
    display: flex;
    gap: 3px;
    margin-left: 7px;
}
.tasks button {
    flex: 0 1 160px;
    gap: 3px;
    height: 26px;
    padding-left: 3px;
    border-radius: 3px 3px 0 0;
    background: linear-gradient(#505050, #333);
}
.tasks svg {
    width: 16px;
    height: 16px;
}
.tasks .current {
    background: linear-gradient(#8a8a8a, #585858);
}
.tray {
    display: flex;
    align-items: center;
    gap: 7px;
    padding-right: 3px;
    font-weight: bold;
}
```
